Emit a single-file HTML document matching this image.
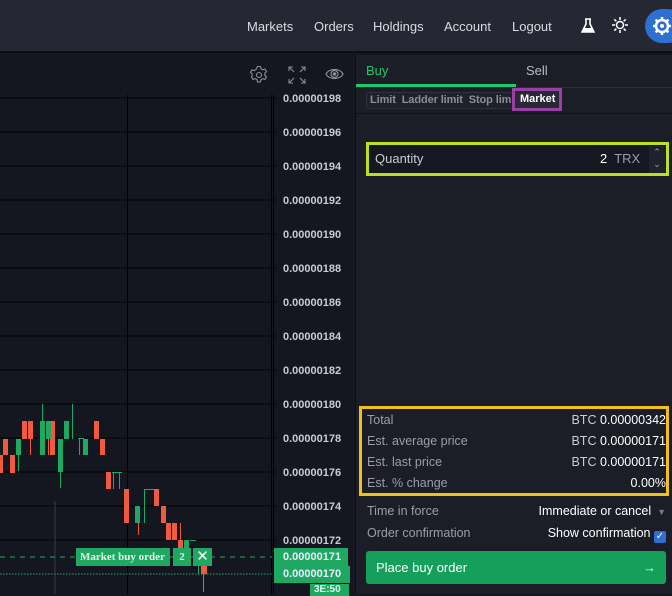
<!DOCTYPE html>
<html><head><meta charset="utf-8"><style>
*{margin:0;padding:0;box-sizing:border-box}
body{width:672px;height:594px;overflow:hidden;background:#141720;font-family:"Liberation Sans",Arial,sans-serif;position:relative}
.hdr{position:absolute;left:0;top:0;width:672px;height:53px;background:#252833;border-bottom:2px solid #0c0e13}
.nav{position:absolute;top:19px;font-size:13px;color:#d8dbe2}
.panel{position:absolute;left:355px;top:55px;width:317px;height:539px;background:#1b1e27;border-left:1px solid #0c0e13}
.abs{position:absolute}
.lbl{position:absolute;left:283px;font-size:11px;font-weight:bold;color:#c9ccd3}
.row{position:absolute;left:367px;width:299px;font-size:12.5px;color:#9a9ea8;height:16px}
.row .r{position:absolute;right:0;top:0;color:#c9ccd3;white-space:nowrap}
.row b{font-weight:normal;color:#fff}
</style></head><body>
<div class="hdr">
<span class="nav" style="left:247px">Markets</span>
<span class="nav" style="left:314px">Orders</span>
<span class="nav" style="left:373px">Holdings</span>
<span class="nav" style="left:444px">Account</span>
<span class="nav" style="left:512px">Logout</span>
<svg class="abs" style="left:581px;top:18px" width="14" height="16" viewBox="0 0 14 16"><path d="M4 1h6M5 1v5L1 14h12L9 6V1" fill="none" stroke="#fff" stroke-width="1.6"/><path d="M3 10h8l2 4H1z" fill="#fff"/></svg>
<svg class="abs" style="left:611px;top:16px" width="18" height="18" viewBox="0 0 18 18" stroke="#fff" stroke-width="1.5" fill="none"><circle cx="9" cy="9" r="3.5"/><path d="M9 1v3M9 14v3M1 9h3M14 9h3M3.3 3.3l2 2M12.7 12.7l2 2M3.3 14.7l2-2M12.7 5.3l2-2"/></svg>
<div class="abs" style="left:645px;top:9px;width:40px;height:34px;border-radius:17px;background:#2f6fcf"></div>
<svg class="abs" style="left:652px;top:16px" width="20" height="20" viewBox="0 0 20 20"><circle cx="10" cy="10" r="6" fill="none" stroke="#fff" stroke-width="2.5"/><circle cx="10" cy="10" r="2" fill="#fff"/><path d="M10 1v4M10 15v4M1 10h4M15 10h4M3.6 3.6l3 3M13.4 13.4l3 3M3.6 16.4l3-3M13.4 6.6l3-3" stroke="#fff" stroke-width="2.5"/></svg>
</div>

<svg class="abs" style="left:0;top:55px" width="355" height="539" viewBox="0 55 355 539">
<g stroke="#000" stroke-width="1">
<line x1="0" y1="98" x2="276" y2="98"/><line x1="0" y1="132" x2="276" y2="132"/><line x1="0" y1="166" x2="276" y2="166"/><line x1="0" y1="200" x2="276" y2="200"/><line x1="0" y1="234" x2="276" y2="234"/><line x1="0" y1="268" x2="276" y2="268"/><line x1="0" y1="302" x2="276" y2="302"/><line x1="0" y1="336" x2="276" y2="336"/><line x1="0" y1="370" x2="276" y2="370"/><line x1="0" y1="404" x2="276" y2="404"/><line x1="0" y1="438" x2="276" y2="438"/><line x1="0" y1="472" x2="276" y2="472"/><line x1="0" y1="506" x2="276" y2="506"/><line x1="0" y1="540" x2="276" y2="540"/>
<line x1="127.5" y1="95" x2="127.5" y2="594"/><line x1="271.5" y1="95" x2="271.5" y2="594"/><line x1="273.5" y1="95" x2="273.5" y2="594"/>
</g>
<line x1="55" y1="501" x2="55" y2="594" stroke="#3a3d46"/>
<g fill="#f05a3f">
<rect x="0" y="455" width="3" height="18"/><rect x="3" y="439" width="5" height="16"/><rect x="10" y="455" width="5" height="18"/><rect x="22" y="421" width="5" height="18"/><rect x="28" y="421" width="5" height="18"/><rect x="50" y="421" width="5" height="34"/><rect x="94" y="421" width="5" height="18"/><rect x="100" y="439" width="5" height="16"/><rect x="106" y="472" width="5" height="17"/><rect x="124" y="489" width="5" height="34"/><rect x="154" y="489" width="5" height="17"/><rect x="161" y="506" width="5" height="17"/><rect x="166" y="523" width="5" height="17"/><rect x="172" y="523" width="5" height="17"/><rect x="178" y="540" width="5" height="17"/><rect x="201" y="566" width="6" height="8"/><rect x="203" y="574" width="1" height="18"/><rect x="138" y="523" width="1" height="12"/><rect x="180" y="523" width="1" height="34"/><rect x="30" y="439" width="1" height="16"/><rect x="48" y="439" width="1" height="16"/>
</g>
<g fill="#1fa862">
<rect x="16" y="439" width="5" height="16"/><rect x="18" y="455" width="1" height="16"/><rect x="40" y="421" width="5" height="34"/><rect x="42" y="404" width="1" height="17"/><rect x="46" y="421" width="5" height="18"/><rect x="58" y="439" width="5" height="33"/><rect x="60" y="472" width="1" height="16"/><rect x="64" y="421" width="5" height="18"/><rect x="72" y="404" width="1" height="35"/><rect x="78" y="438" width="6" height="1"/><rect x="83" y="439" width="5" height="16"/><rect x="79" y="439" width="1" height="16"/><rect x="113" y="472" width="1" height="17"/><rect x="119" y="472" width="1" height="17"/><rect x="112" y="472" width="10" height="1"/><rect x="135" y="506" width="5" height="17"/><rect x="144" y="489" width="1" height="34"/><rect x="144" y="489" width="10" height="1"/><rect x="184" y="540" width="5" height="17"/><rect x="190" y="540" width="6" height="1"/><rect x="198" y="557" width="1" height="17"/></g>
<line x1="0" y1="557" x2="272" y2="557" stroke="#1fa862" stroke-dasharray="5,5"/>
<line x1="0" y1="574" x2="272" y2="574" stroke="#1fa862" stroke-dasharray="1.5,1.5"/>
</svg>
<svg class="abs" style="left:249px;top:65px" width="20" height="20" viewBox="0 0 20 20" fill="none" stroke="#8a8e98" stroke-width="1.1"><circle cx="10" cy="10" r="2.5"/><path d="M8.5 1.5h3l.5 2.3 1.8 1 2.2-.8 1.5 2.6-1.7 1.6v2l1.7 1.6-1.5 2.6-2.2-.8-1.8 1-.5 2.3h-3l-.5-2.3-1.8-1-2.2.8-1.5-2.6L3.1 11V9L1.4 7.4l1.5-2.6 2.2.8 1.8-1z"/></svg>
<svg class="abs" style="left:288px;top:66px" width="18" height="18" viewBox="0 0 18 18" fill="none" stroke="#8a8e98" stroke-width="1.1"><path d="M1 5V1h4M1 1l5 5M17 5V1h-4M17 1l-5 5M1 13v4h4M1 17l5-5M17 13v4h-4M17 17l-5-5"/></svg>
<svg class="abs" style="left:325px;top:67px" width="19" height="14" viewBox="0 0 19 14" fill="none" stroke="#8a8e98" stroke-width="1.2"><path d="M1 7C4 1 15 1 18 7 15 13 4 13 1 7z"/><circle cx="9.5" cy="7" r="3.5"/><circle cx="9.5" cy="7" r="1.2" fill="#8a8e98"/></svg>

<div class="lbl" style="top:93px">0.00000198</div><div class="lbl" style="top:127px">0.00000196</div><div class="lbl" style="top:161px">0.00000194</div><div class="lbl" style="top:195px">0.00000192</div><div class="lbl" style="top:229px">0.00000190</div><div class="lbl" style="top:263px">0.00000188</div><div class="lbl" style="top:297px">0.00000186</div><div class="lbl" style="top:331px">0.00000184</div><div class="lbl" style="top:365px">0.00000182</div><div class="lbl" style="top:399px">0.00000180</div><div class="lbl" style="top:433px">0.00000178</div><div class="lbl" style="top:467px">0.00000176</div><div class="lbl" style="top:501px">0.00000174</div><div class="lbl" style="top:535px">0.00000172</div>
<div class="abs" style="left:274px;top:548px;width:74px;height:18px;background:#1fa862"></div>
<div class="abs" style="left:274px;top:566px;width:76px;height:17px;background:#1fa862"></div>
<div class="abs" style="left:310px;top:584px;width:39px;height:12px;background:#1fa862;color:#dfe;font-size:10px;font-weight:bold;padding-left:4px">3E:50</div>
<div class="lbl" style="top:551px;color:#eef">0.00000171</div><div class="lbl" style="top:568px;color:#eef">0.00000170</div>
<div class="abs" style="left:76px;top:548px;width:94px;height:18px;background:#1fa862;color:#e8f5ec;font:bold 11px 'Liberation Serif',serif;line-height:18px;padding-left:4px">Market buy order</div>
<div class="abs" style="left:173px;top:548px;width:18px;height:18px;background:#1fa862;color:#e8f5ec;font:bold 11px 'Liberation Serif',serif;line-height:18px;text-align:center">2</div>
<div class="abs" style="left:193px;top:548px;width:19px;height:18px;background:#1fa862;color:#fff;font-size:15px;line-height:18px;text-align:center">✕</div>

<div class="panel"></div>
<div class="abs" style="left:366px;top:63px;font-size:13px;color:#1fc86a">Buy</div>
<div class="abs" style="left:526px;top:63px;font-size:13px;color:#b8bcc5">Sell</div>
<div class="abs" style="left:356px;top:84px;width:160px;height:3px;background:#1fc86a"></div>
<div class="abs" style="left:356px;top:87px;width:316px;height:1px;background:#2a2d37"></div>
<div class="abs" style="left:366px;top:92px;width:150px;height:17px;border:1px solid #2f323c;border-radius:3px;background:#1e212a"></div>
<div class="abs" style="left:370px;top:94px;font-size:11px;font-weight:bold;color:#8a8e98;letter-spacing:-0.1px">Limit&nbsp; Ladder limit&nbsp; Stop limit</div>
<div class="abs" style="left:512px;top:88px;width:50px;height:23px;border:3px solid #9b3fa6;background:#272a36;color:#fff;font-size:11px;font-weight:bold;padding:2px 0 0 5px">Market</div>
<div class="abs" style="left:356px;top:113px;width:316px;height:1px;background:#0f1116"></div>
<div class="abs" style="left:366px;top:142px;width:303px;height:34px;border:3px solid #bde01e;background:#151820"></div>
<div class="abs" style="left:375px;top:151px;font-size:13px;color:#c9ccd3">Quantity</div>
<div class="abs" style="left:600px;top:151px;font-size:13px;color:#fff">2&nbsp; <span style="color:#9a9ea8">TRX</span></div>
<div class="abs" style="left:649px;top:146px;width:16px;height:27px;background:#1f222b;color:#aaa;font-size:9px;line-height:12px;text-align:center">⌃<br>⌄</div>
<div class="abs" style="left:359px;top:406px;width:310px;height:90px;border:3px solid #f2c018"></div>
<div class="row" style="top:413px">Total<span class="r">BTC <b>0.00000342</b></span></div>
<div class="row" style="top:434px">Est. average price<span class="r">BTC <b>0.00000171</b></span></div>
<div class="row" style="top:455px">Est. last price<span class="r">BTC <b>0.00000171</b></span></div>
<div class="row" style="top:476px">Est. % change<span class="r"><b>0.00%</b></span></div>
<div class="row" style="top:504px">Time in force<span class="r" style="color:#fff">Immediate or cancel <span style="color:#777;font-size:9px">&nbsp;▼</span></span></div>
<div class="row" style="top:526px">Order confirmation<span class="r" style="color:#fff">Show confirmation <span style="display:inline-block;width:12px;height:12px;background:#2f6fcf;border-radius:2px;color:#fff;font-size:10px;line-height:12px;text-align:center;vertical-align:-2px">✓</span></span></div>
<div class="abs" style="left:366px;top:551px;width:300px;height:33px;background:#14a05a;border-radius:3px;color:#fff;font-size:13px;line-height:33px;padding-left:10px">Place buy order<span style="position:absolute;right:10px;color:#cfe">→</span></div>
</body></html>
